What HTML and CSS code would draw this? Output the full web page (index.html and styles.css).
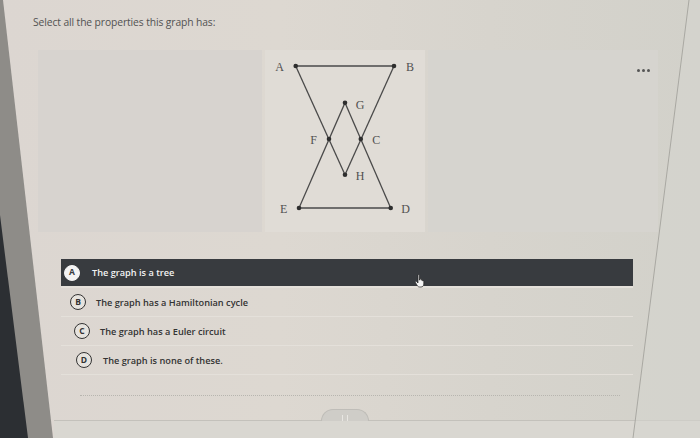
FILE: index.html
```html
<!DOCTYPE html>
<html>
<head>
<meta charset="utf-8">
<link rel="stylesheet" href="styles.css">
</head>
<body>
<div class="screen">
  <div class="content">
    <p class="prompt">Select all the properties this graph has:</p>
    <div class="figure">
      <div class="panel panel-left"></div>
      <div class="panel panel-graph">
        <svg class="graph" width="160" height="182" viewBox="0 0 160 182">
          <g stroke="#4a4a4a" stroke-width="1.3" fill="none">
            <line x1="30.7" y1="16" x2="129" y2="16"/>
            <line x1="34" y1="158" x2="125.7" y2="158"/>
            <line x1="30.7" y1="16" x2="80" y2="124.7"/>
            <line x1="129" y1="16" x2="80" y2="124.7"/>
            <line x1="80" y1="52.7" x2="34" y2="158"/>
            <line x1="80" y1="52.7" x2="125.7" y2="158"/>
          </g>
          <g fill="#2e2e2e">
            <circle cx="30.7" cy="16" r="2.3"/>
            <circle cx="129" cy="16" r="2.3"/>
            <circle cx="80" cy="52.7" r="2.3"/>
            <circle cx="64" cy="89" r="2.3"/>
            <circle cx="95.8" cy="89" r="2.3"/>
            <circle cx="80" cy="124.7" r="2.3"/>
            <circle cx="34" cy="158" r="2.3"/>
            <circle cx="125.7" cy="158" r="2.3"/>
          </g>
          <g class="labels">
            <text x="14.7" y="21">A</text>
            <text x="145" y="21">B</text>
            <text x="95" y="58.5">G</text>
            <text x="48.7" y="93.5">F</text>
            <text x="111.3" y="93.5">C</text>
            <text x="95" y="129.5">H</text>
            <text x="18.7" y="163">E</text>
            <text x="140.7" y="163">D</text>
          </g>
        </svg>
      </div>
      <div class="panel panel-right">
        <div class="more"><span></span><span></span><span></span></div>
      </div>
    </div>

    <div class="options">
      <div class="opt opt-selected">
        <span class="badge badge-light">A</span>
        <span class="opt-text">The graph is a tree</span>
      </div>
      <div class="opt opt-b">
        <span class="badge">B</span>
        <span class="opt-text">The graph has a Hamiltonian cycle</span>
      </div>
      <div class="opt opt-c">
        <span class="badge">C</span>
        <span class="opt-text">The graph has a Euler circuit</span>
      </div>
      <div class="opt opt-d">
        <span class="badge">D</span>
        <span class="opt-text">The graph is none of these.</span>
      </div>
    </div>

    <div class="dotted"></div>
  </div>
  <div class="bottom">
    <div class="tab"><span></span><span></span></div>
  </div>

  <svg class="photo-edges" width="700" height="438" viewBox="0 0 700 438">
    <polygon points="0,0 3,0 53,438 0,438" fill="#8e8c88"/>
    <polygon points="0,215 28,438 0,438" fill="#2c2f33"/>
    <polygon points="689,0 700,0 700,438 633,438" fill="#d6d5cf" opacity="0.55"/>
    <line x1="689" y1="0" x2="633" y2="438" stroke="#a9a8a2" stroke-width="1"/>
  </svg>

  <svg class="cursor" width="12" height="14" viewBox="0 0 12 14">
    <path d="M4 1.2 C4 0.4 5.4 0.4 5.4 1.2 L5.4 6 L6 6 L6 5 C6 4.3 7.3 4.3 7.3 5 L7.3 6.2 C7.3 5.6 8.6 5.6 8.6 6.3 L8.6 7 C8.6 6.5 9.8 6.5 9.8 7.2 L9.8 10 C9.8 11.8 8.6 13 7 13 L5.6 13 C4.4 13 3.6 12.3 3 11.2 L1.4 8.4 C1 7.7 2 7 2.6 7.6 L4 9 Z" fill="#f4f4f4" stroke="#222" stroke-width="0.7"/>
  </svg>
</div>
</body>
</html>
```

FILE: styles.css
```css
html, body {
  margin: 0;
  padding: 0;
}

body {
  width: 700px;
  height: 438px;
  overflow: hidden;
  font-family: "Open Sans", "Liberation Sans", sans-serif;
}

.screen {
  position: relative;
  width: 700px;
  height: 438px;
  overflow: hidden;
  background: linear-gradient(90deg, #dcd6d1 0%, #ddd8d1 40%, #d7d4cd 70%, #d2d1ca 100%);
  display: flex;
  flex-direction: column;
}

.content {
  padding: 16px 0 0 33px;
  display: flex;
  flex-direction: column;
}

.prompt {
  margin: 0;
  font-size: 10.3px;
  line-height: 12px;
  color: #525252;
  letter-spacing: -0.1px;
}

.figure {
  margin-top: 22px;
  margin-left: 5px;
  display: flex;
  gap: 3px;
  height: 182px;
}

.panel {
  height: 182px;
}

.panel-left {
  width: 224px;
  background: #d7d3cf;
}

.panel-graph {
  width: 160px;
  background: #e0dcd6;
}

.graph {
  display: block;
}

.labels text {
  font-family: "Liberation Serif", "DejaVu Serif", serif;
  font-size: 12px;
  fill: #505050;
  text-anchor: middle;
}

.panel-right {
  width: 230px;
  background: #d6d4cf;
  display: flex;
  justify-content: flex-end;
  align-items: flex-start;
}

.more {
  display: flex;
  gap: 2px;
  margin: 19px 8px 0 0;
}

.more span {
  width: 3px;
  height: 3px;
  border-radius: 50%;
  background: #555;
}

.options {
  margin-top: 27px;
  margin-left: 28px;
  width: 572px;
  display: flex;
  flex-direction: column;
}

.opt {
  display: flex;
  align-items: center;
  height: 28px;
  gap: 10px;
  border-bottom: 1px solid #e4e0da;
  color: #333;
}

.opt-selected {
  height: 27px;
  background: #383b3f;
  color: #f2f2f2;
  padding-left: 3px;
  gap: 12px;
  border-bottom: 2px solid #e4e0da;
}

.opt-b { padding-left: 9px; }
.opt-c { padding-left: 13px; }
.opt-d { padding-left: 15px; gap: 11px; }

.badge {
  width: 14px;
  height: 14px;
  border-radius: 50%;
  border: 1.5px solid #333;
  background: #e6e3de;
  color: #333;
  font-size: 8.5px;
  font-weight: 700;
  display: flex;
  align-items: center;
  justify-content: center;
  line-height: 1;
}

.badge-light {
  border-color: #f4f4f4;
  background: #f4f4f4;
  color: #383b3f;
}

.opt-text {
  font-size: 9.2px;
  font-weight: 600;
  white-space: nowrap;
}

.dotted {
  margin-top: 20px;
  margin-left: 47px;
  width: 540px;
  border-top: 1px dotted #b7b5af;
}

.bottom {
  margin-top: 24px;
  margin-left: 54px;
  border-top: 1px solid #c3c1bb;
  height: 18px;
  background: #d9d7d1;
  position: relative;
}

.tab {
  position: absolute;
  left: 267px;
  top: -12px;
  width: 46px;
  height: 11px;
  border-radius: 23px 23px 0 0;
  background: #cfcdc8;
  border: 1px solid #bfbdb8;
  border-bottom: none;
  display: flex;
  justify-content: center;
  align-items: flex-end;
  gap: 4px;
}

.tab span {
  width: 1px;
  height: 6px;
  background: #e8e6e2;
}

.photo-edges {
  position: absolute;
  left: 0;
  top: 0;
  pointer-events: none;
}

.cursor {
  position: absolute;
  left: 414px;
  top: 274px;
}
```
